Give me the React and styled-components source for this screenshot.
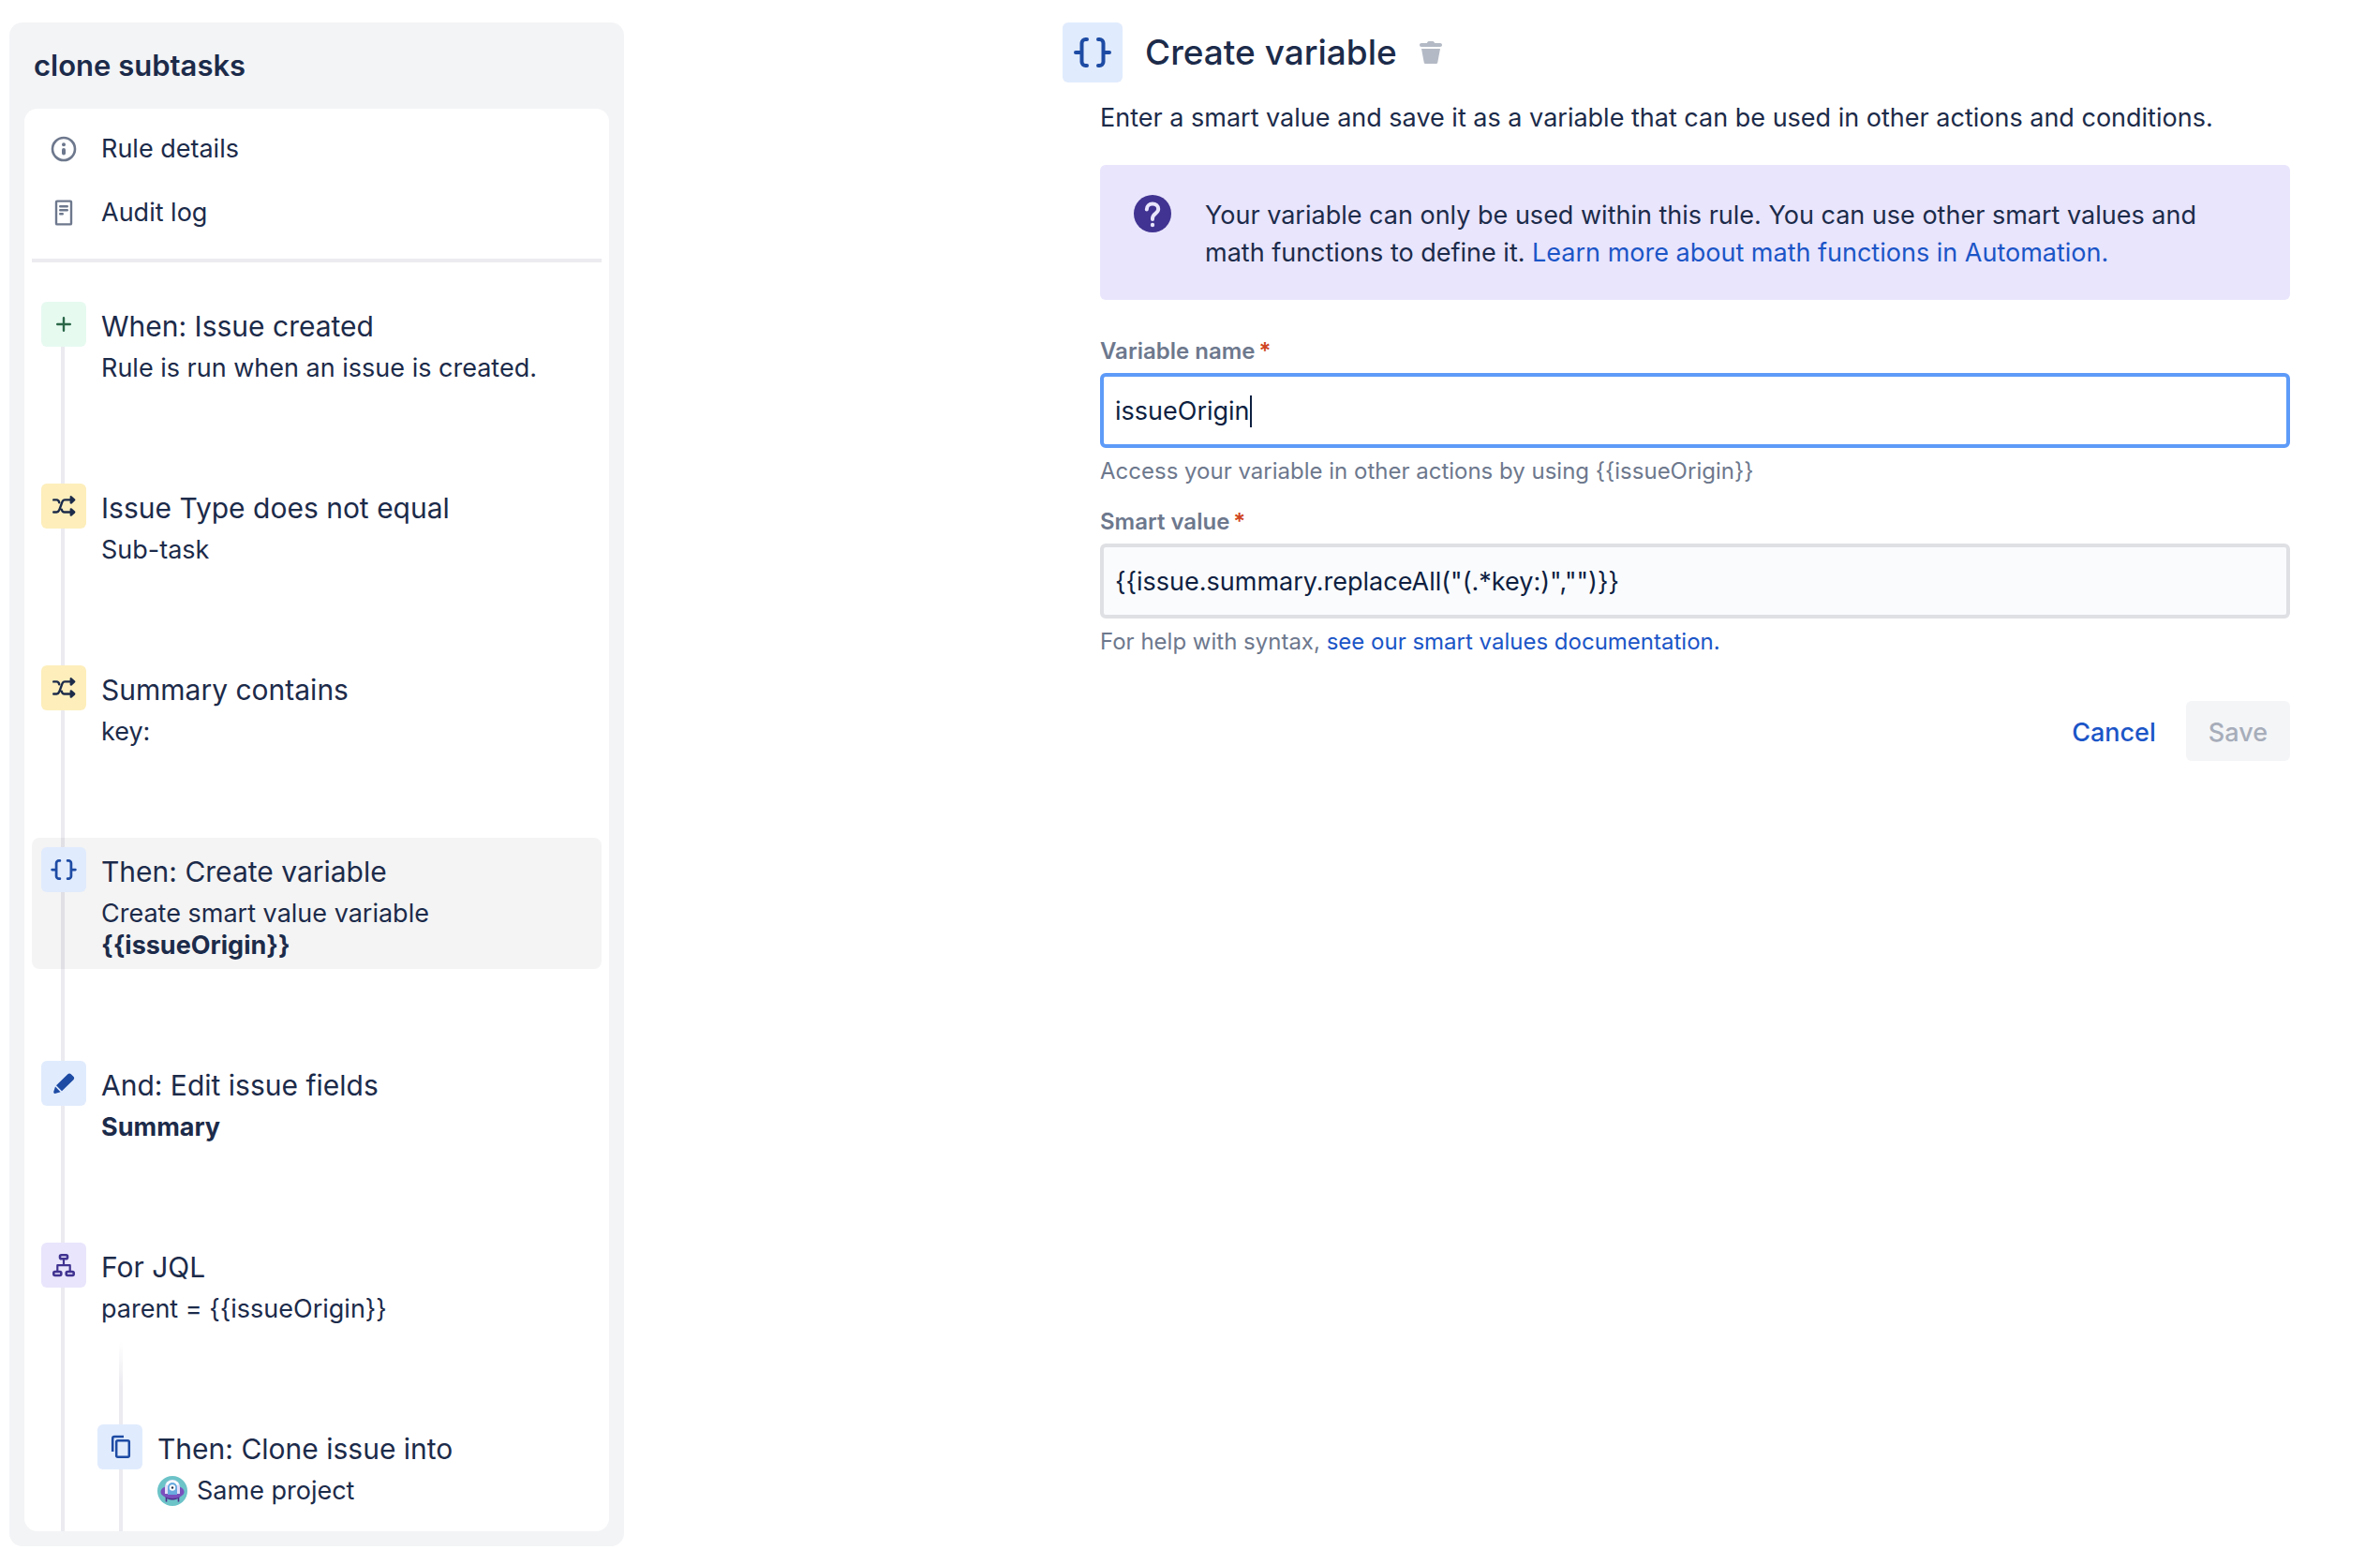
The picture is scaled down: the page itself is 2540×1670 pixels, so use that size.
import React, { useState } from 'react';
import styled, { createGlobalStyle } from 'styled-components';

const GlobalStyle = createGlobalStyle`
  * {
    box-sizing: border-box;
  }

  body {
    margin: 0;
    background: #ffffff;
    color: #1c2b4a;
    font-family: Inter, 'Liberation Sans', sans-serif;
    font-size: 27px;
    line-height: 40px;
  }

  h1, h2, h3, p, ul {
    margin: 0;
    padding: 0;
  }

  ul {
    list-style: none;
  }

  a {
    color: #1b55c7;
    text-decoration: none;
  }
`;

const Page = styled.div`
  display: flex;
  justify-content: space-between;
  align-items: flex-start;
  padding: 24px 96px 20px 10px;
`;

const Sidebar = styled.aside`
  flex: 0 0 656px;
  padding: 0 16px 16px;
  background: #f3f4f6;
  border-radius: 14px;
`;

const RuleName = styled.h2`
  padding: 0 10px;
  font-size: 31px;
  font-weight: 600;
  line-height: 92px;
`;

const RuleCard = styled.div`
  padding: 8px 8px 0;
  background: #ffffff;
  border-radius: 14px;
`;

const NavLink = styled.a`
  display: grid;
  grid-template-columns: 48px 1fr;
  align-items: center;
  gap: 16px;
  height: 68px;
  padding: 2px 10px 0;
  color: #1c2b4a;
`;

const NavIcon = styled.span`
  display: flex;
  justify-content: center;
  color: #6d788d;
`;

const Divider = styled.hr`
  height: 4px;
  margin: 16px 0 32px;
  border: 0;
  background: #ebebf0;
`;

const Steps = styled.ul`
  position: relative;
  display: grid;
  gap: 88px;
  padding-bottom: 18px;

  &::before {
    content: '';
    position: absolute;
    top: 38px;
    bottom: 0;
    left: 31px;
    width: 4px;
    background: #ebebf0;
  }
`;

const Branch = styled.ul`
  position: relative;
  margin: 0 0 -18px 60px;
  padding: 88px 0 18px;

  &::before {
    content: '';
    position: absolute;
    top: 10px;
    bottom: 0;
    left: 33px;
    width: 4px;
    background: linear-gradient(rgba(235, 235, 240, 0), #ebebf0 48px);
  }
`;

const StepRow = styled.div`
  position: relative;
  display: grid;
  grid-template-columns: 48px 1fr;
  gap: 16px;
  padding: 10px 10px 8px;
  border-radius: 8px;
  background: ${props => (props.$selected ? 'rgba(0, 0, 0, 0.043)' : 'transparent')};
`;

const tones = {
  green: { background: '#e6faf0', color: '#2a6647' },
  yellow: { background: '#fdeebb', color: '#1c2b4a' },
  blue: { background: '#e0ebfd', color: '#1d4ba4' },
  purple: { background: '#e9e5fc', color: '#403391' }
};

const Tile = styled.span`
  display: flex;
  align-items: center;
  justify-content: center;
  flex: none;
  width: ${props => props.$size}px;
  height: ${props => props.$size}px;
  border-radius: 6px;
  background: ${props => tones[props.$tone].background};
  color: ${props => tones[props.$tone].color};
`;

const StepText = styled.div`
  padding-top: 6px;
`;

const StepTitle = styled.h3`
  margin-bottom: 8px;
  font-size: 30px;
  font-weight: 400;
  line-height: 40px;
`;

const StepDetail = styled.p`
  display: flex;
  align-items: center;
  gap: 10px;
  font-weight: ${props => (props.$strong ? 700 : 400)};
  line-height: 34px;
`;

const Editor = styled.main`
  flex: 0 1 1310px;
  margin-left: 40px;
`;

const EditorHeader = styled.header`
  display: flex;
  align-items: center;
  gap: 24px;
`;

const EditorTitle = styled.h1`
  font-size: 37px;
  font-weight: 500;
  line-height: 64px;
`;

const DeleteButton = styled.button`
  display: flex;
  padding: 0;
  border: 0;
  background: none;
  color: #b4bac5;
  cursor: pointer;
`;

const EditorBody = styled.form`
  margin: 18px 0 0 40px;
`;

const InfoPanel = styled.section`
  display: flex;
  gap: 36px;
  margin: 30px 0 39px;
  padding: 32px 36px 30px;
  border-radius: 6px;
  background: #e9e5fc;

  svg {
    flex: none;
  }

  p {
    padding-top: 2px;
  }
`;

const Field = styled.div`
  margin-bottom: 22px;
`;

const Label = styled.label`
  display: block;
  margin-bottom: 7px;
  color: #6d788d;
  font-size: 24px;
  font-weight: 600;
  line-height: 32px;
`;

const Required = styled.span`
  margin-left: 4px;
  color: #cf4520;
`;

const InputFrame = styled.div`
  display: flex;
  align-items: center;
  height: 80px;
  padding: 2px 12px 0;
  border: 4px solid ${props => (props.$active ? '#5e9bf8' : '#dfe0e4')};
  border-radius: 6px;
  background: ${props => (props.$active ? '#ffffff' : '#fafbfd')};
`;

const TextInput = styled.input`
  field-sizing: content;
  max-width: 100%;
  padding: 0;
  border: 0;
  outline: 0;
  background: none;
  color: #0e1f41;
  caret-color: transparent;
  font: inherit;
`;

const Caret = styled.span`
  width: 2px;
  height: 34px;
  background: #0e1f41;
`;

const Help = styled.p`
  margin-top: 9px;
  color: #6d788d;
  font-size: 24px;
  line-height: 32px;
`;

const Actions = styled.div`
  display: flex;
  justify-content: flex-end;
  gap: 8px;
  margin-top: 47px;
`;

const Button = styled.button`
  height: 64px;
  padding: 2px 24px 0;
  border: 0;
  border-radius: 6px;
  background: none;
  color: #1b55c7;
  font-family: inherit;
  font-size: 27px;
  font-weight: 500;

  &:disabled {
    background: #f4f5f7;
    color: #a7adba;
  }
`;

const InfoIcon = () => (
  <svg width="28" height="28" viewBox="0 0 28 28" fill="none" aria-hidden="true">
    <circle cx="14" cy="14" r="12" stroke="currentColor" strokeWidth="2.6" />
    <circle cx="14" cy="9.2" r="2" fill="currentColor" />
    <path d="M14 15v3.600" stroke="currentColor" strokeWidth="4" strokeLinecap="round" />
  </svg>
);

const LogIcon = () => (
  <svg width="28" height="28" viewBox="0 0 28 28" fill="none" stroke="currentColor" strokeLinecap="round" aria-hidden="true">
    <rect x="6" y="1.600" width="16" height="24.800" rx="1" strokeWidth="2.400" />
    <path d="M10.200 7.300h7.600M10.200 11.300h7.600M10.200 15.300h2.600" strokeWidth="2.400" />
  </svg>
);

const PlusIcon = () => (
  <svg width="48" height="48" viewBox="0 0 48 48" stroke="currentColor" strokeWidth="2.400" strokeLinecap="round" aria-hidden="true">
    <path d="M24 17.200v13.600M17.200 24h13.600" />
  </svg>
);

const ShuffleIcon = () => (
  <svg width="48" height="48" viewBox="0 0 48 48" fill="none" stroke="currentColor" strokeWidth="2.400" strokeLinecap="round" strokeLinejoin="round" aria-hidden="true">
    <path d="M13.200 17.400h3.200c1.600 0 2.400.8 2.800 2.800M13.200 30.500h3.200c1.600 0 2.200-.7 2.800-2.200l3.200-8.700c.6-1.500 1.300-2.200 2.900-2.200H33M21.800 27.700c.5 2 1.300 2.800 2.900 2.800H33" />
    <path d="M31.800 14.300l3.400 3.100-3.400 3.100zM31.800 27.400l3.400 3.100-3.400 3.100z" fill="currentColor" />
  </svg>
);

const BracesIcon = ({ size }) => (
  <svg width={size} height={size} viewBox="0 0 64 64" fill="none" stroke="currentColor" strokeWidth="4" strokeLinecap="round" strokeLinejoin="round" aria-hidden="true">
    <path d="M26 18h-1.500a4 4 0 0 0-4 4v20a4 4 0 0 0 4 4H26M20.500 32H14M38 18h1.500a4 4 0 0 1 4 4v20a4 4 0 0 1-4 4H38M43.500 32H50" />
  </svg>
);

const PencilIcon = () => (
  <svg width="48" height="48" viewBox="0 0 48 48" fill="currentColor" aria-hidden="true">
    <path d="M28.300 14.200c1-1 2.500-1 3.500 0l2.600 2.600c1 1 1 2.400 0 3.400L22 32.300l-6-6zM15 27.600l5.600 5.600-5.200 1.600c-1.500.4-2.500-.5-2.100-2z" />
  </svg>
);

const BranchIcon = () => (
  <svg width="48" height="48" viewBox="0 0 48 48" fill="none" stroke="currentColor" strokeWidth="2.600" strokeLinejoin="round" aria-hidden="true">
    <rect x="20" y="13.300" width="8" height="4" rx="1.500" />
    <rect x="13.300" y="31" width="8" height="4" rx="1.500" />
    <rect x="26.700" y="31" width="8" height="4" rx="1.500" />
    <path d="M24 18v6M17.300 31v-6.800h13.400V31" strokeWidth="2.200" />
  </svg>
);

const CopyIcon = () => (
  <svg width="48" height="48" viewBox="0 0 48 48" fill="none" stroke="currentColor" strokeWidth="2.500" strokeLinejoin="round" aria-hidden="true">
    <path d="M16.200 29V15a2 2 0 0 1 2-2H28" />
    <rect x="20.200" y="17.200" width="13.600" height="17.600" rx="1.500" />
  </svg>
);

const TrashIcon = () => (
  <svg width="24" height="24" viewBox="0 0 24 24" fill="currentColor" aria-hidden="true">
    <path d="M8 2c0-1 .8-2 2-2h4c1.200 0 2 1 2 2h6c1.200 0 2 .8 2 2s-.8 2-2 2H2C.8 6 0 5.200 0 4s.8-2 2-2zM2 8h20l-2.700 14.400c-.2 1-.9 1.600-1.900 1.600H6.600c-1 0-1.700-.6-1.900-1.600z" />
  </svg>
);

const QuestionIcon = () => (
  <svg width="40" height="40" viewBox="0 0 40 40" fill="none" aria-hidden="true">
    <circle cx="20" cy="20" r="20" fill="#403391" />
    <path d="M13.800 15.400c0-3.600 2.700-5.900 6.200-5.900s6.200 2.300 6.200 5.600c0 4.800-6.200 4.700-6.200 9.900v1" stroke="#e9e5fc" strokeWidth="4" strokeLinecap="round" />
    <circle cx="20" cy="32" r="2.200" fill="#e9e5fc" />
  </svg>
);

const ProjectAvatar = () => (
  <svg width="32" height="32" viewBox="0 0 32 32" aria-hidden="true">
    <circle cx="16" cy="16" r="16" fill="#6cc3c8" />
    <path d="M9.500 23v4.500M22.500 23v4.500" stroke="#4c2f8c" strokeWidth="1.600" />
    <path d="M8 22c1 2 4.500 3.500 8 3.500s7-1.500 8-3.500z" fill="#4c2f8c" />
    <ellipse cx="16" cy="17" rx="12.500" ry="7" fill="#7a50bd" />
    <path d="M8 19v-7a8 8 0 0 1 16 0v7z" fill="#e4defa" />
    <path d="M9 9a8 8 0 0 1 14 0l-7 3z" fill="#ffffff" />
    <path d="M11 20v-8a5 5 0 0 1 10 0v8z" fill="#69a9df" />
    <circle cx="16" cy="12.500" r="3.200" fill="#ffffff" />
    <circle cx="16" cy="12.500" r="1.200" fill="#26334f" />
  </svg>
);

const steps = [
  { tone: 'green', icon: <PlusIcon />, title: 'When: Issue created', details: ['Rule is run when an issue is created.'] },
  { tone: 'yellow', icon: <ShuffleIcon />, title: 'Issue Type does not equal', details: ['Sub-task'] },
  { tone: 'yellow', icon: <ShuffleIcon />, title: 'Summary contains', details: ['key:'] },
  {
    tone: 'blue',
    icon: <BracesIcon size={44} />,
    title: 'Then: Create variable',
    details: ['Create smart value variable'],
    strong: '{{issueOrigin}}',
    selected: true
  },
  { tone: 'blue', icon: <PencilIcon />, title: 'And: Edit issue fields', details: [], strong: 'Summary' },
  {
    tone: 'purple',
    icon: <BranchIcon />,
    title: 'For JQL',
    details: ['parent = {{issueOrigin}}'],
    children: [
      { tone: 'blue', icon: <CopyIcon />, title: 'Then: Clone issue into', details: ['Same project'], avatar: true }
    ]
  }
];

const Step = ({ step }) => (
  <li>
    <StepRow $selected={step.selected}>
      <Tile $size={48} $tone={step.tone}>{step.icon}</Tile>
      <StepText>
        <StepTitle>{step.title}</StepTitle>
        {step.details.map(detail => (
          <StepDetail key={detail}>
            {step.avatar && <ProjectAvatar />}
            {detail}
          </StepDetail>
        ))}
        {step.strong && <StepDetail $strong>{step.strong}</StepDetail>}
      </StepText>
    </StepRow>
    {step.children && (
      <Branch>
        {step.children.map(child => <Step key={child.title} step={child} />)}
      </Branch>
    )}
  </li>
);

const App = () => {
  const [name, setName] = useState('issueOrigin');
  const [value, setValue] = useState('{{issue.summary.replaceAll("(.*key:)","")}}');

  return (
    <Page>
      <GlobalStyle />
      <Sidebar>
        <RuleName>clone subtasks</RuleName>
        <RuleCard>
          <nav>
            <NavLink href="#details"><NavIcon><InfoIcon /></NavIcon>Rule details</NavLink>
            <NavLink href="#audit"><NavIcon><LogIcon /></NavIcon>Audit log</NavLink>
          </nav>
          <Divider />
          <Steps>
            {steps.map(step => <Step key={step.title} step={step} />)}
          </Steps>
        </RuleCard>
      </Sidebar>
      <Editor>
        <EditorHeader>
          <Tile $size={64} $tone="blue"><BracesIcon size={64} /></Tile>
          <EditorTitle>Create variable</EditorTitle>
          <DeleteButton type="button" aria-label="Delete"><TrashIcon /></DeleteButton>
        </EditorHeader>
        <EditorBody>
          <p>Enter a smart value and save it as a variable that can be used in other actions and conditions.</p>
          <InfoPanel>
            <QuestionIcon />
            <p>
              Your variable can only be used within this rule. You can use other smart values and math
              functions to define it. <a href="#math">Learn more about math functions in Automation.</a>
            </p>
          </InfoPanel>
          <Field>
            <Label htmlFor="name">Variable name<Required>*</Required></Label>
            <InputFrame $active>
              <TextInput id="name" value={name} onChange={e => setName(e.target.value)} />
              <Caret />
            </InputFrame>
            <Help>Access your variable in other actions by using {`{{${name}}}`}</Help>
          </Field>
          <Field>
            <Label htmlFor="value">Smart value<Required>*</Required></Label>
            <InputFrame>
              <TextInput id="value" value={value} onChange={e => setValue(e.target.value)} />
            </InputFrame>
            <Help>For help with syntax, <a href="#docs">see our smart values documentation.</a></Help>
          </Field>
          <Actions>
            <Button type="button">Cancel</Button>
            <Button type="submit" disabled>Save</Button>
          </Actions>
        </EditorBody>
      </Editor>
    </Page>
  );
};

export default App;
